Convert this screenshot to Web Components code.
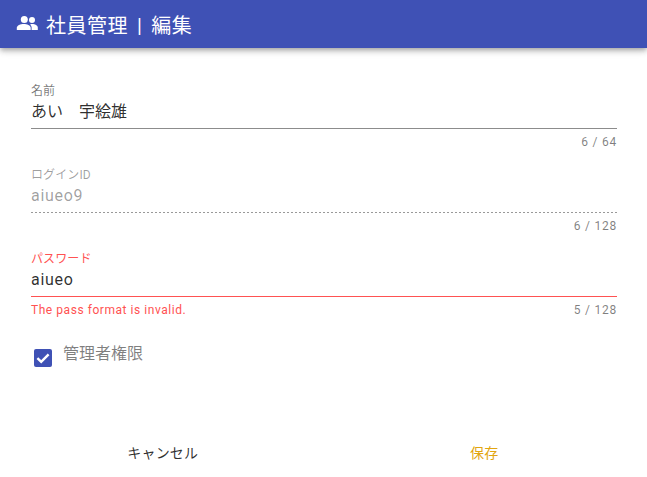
<!DOCTYPE html>
<html lang="ja">
<head>
<meta charset="utf-8">
<style>
    html, body { margin: 0; height: 100%; background: #fff; }
    body { font-family: Roboto, 'Noto Sans CJK JP', sans-serif; overflow: hidden; }
</style>
</head>
<body>
<edit-page>
    <app-bar slot="bar">社員管理 | 編集</app-bar>
    <text-field label="名前" value="あい　宇絵雄" counter="6 / 64"></text-field>
    <text-field label="ログインID" value="aiueo9" counter="6 / 128" disabled latin></text-field>
    <text-field label="パスワード" value="aiueo" counter="5 / 128" error="The pass format is invalid." latin></text-field>
    <check-box>管理者権限</check-box>
    <text-button slot="actions">キャンセル</text-button>
    <text-button slot="actions" color="#e2a50f">保存</text-button>
</edit-page>
<script>
class AppBar extends HTMLElement {
    constructor() {
        super();
        const shadow = this.attachShadow({ mode: 'open' });
        shadow.innerHTML = `
            <style>
                :host {
                    display: flex;
                    align-items: center;
                    gap: 8px;
                    height: 48px;
                    padding: 0 16px;
                    background: #3f51b5;
                    color: #fff;
                    font-size: 20px;
                    letter-spacing: .5px;
                    word-spacing: 3.5px;
                    box-shadow: 0 2px 4px -1px rgba(0,0,0,.2), 0 4px 5px 0 rgba(0,0,0,.14), 0 1px 10px 0 rgba(0,0,0,.12);
                }
                svg { width: 22px; height: 22px; fill: #fff; flex: none; }
            </style>
            <svg viewBox="0 0 22 22">
                <circle cx="8.3" cy="6.4" r="3.5"/>
                <circle cx="16" cy="7.1" r="3"/>
                <path d="M.8 17v-2.2C.8 12.4 4.5 11 7.7 11s7 1.4 7 3.8V17z"/>
                <path d="M15.6 17v-2.4c0-1.3-.6-2.3-1.5-3.2.7-.2 1.5-.4 2.2-.4 2.6 0 5.5 1.3 5.5 3.6V17z"/>
            </svg>
            <slot></slot>
        `;
    }
}

class TextField extends HTMLElement {
    constructor() {
        super();
        const shadow = this.attachShadow({ mode: 'open' });
        shadow.innerHTML = `
            <style>
                :host {
                    display: block;
                    height: 84px;
                    box-sizing: border-box;
                    padding-top: 1px;
                    --accent: rgba(0,0,0,.54);
                    --text: rgba(0,0,0,.82);
                    --line: 1px solid #8c8c8c;
                }
                :host([disabled]) {
                    --accent: rgba(0,0,0,.38);
                    --text: rgba(0,0,0,.38);
                }
                :host([error]) {
                    --accent: #ff5252;
                    --line: 1px solid #ff5252;
                }
                :host([latin]) .input { letter-spacing: .7px; }
                :host([disabled]) .input {
                    border-image: repeating-linear-gradient(90deg, #999 0, #999 2px, transparent 2px, transparent 4px) 1 repeat;
                }
                .label { color: var(--accent); font-size: 12px; line-height: 16px; height: 14px; margin-top: -2px; padding-bottom: 4px; letter-spacing: .1px; }
                .input { color: var(--text); font-size: 16px; line-height: 22px; height: 22px; border-bottom: var(--line); padding-bottom: 5px; }
                .details { display: flex; justify-content: space-between; font-size: 12px; line-height: 14px; margin-top: 6px; }
                .error { color: #ff5252; letter-spacing: .55px; }
                .counter { color: rgba(0,0,0,.5); letter-spacing: .75px; }
            </style>
            <div class="label"></div>
            <div class="input"></div>
            <div class="details"><span class="error"></span><span class="counter"></span></div>
        `;
    }

    connectedCallback() {
        const shadow = this.shadowRoot;
        shadow.querySelector('.label').textContent = this.getAttribute('label');
        shadow.querySelector('.input').textContent = this.getAttribute('value');
        shadow.querySelector('.error').textContent = this.getAttribute('error') || '';
        shadow.querySelector('.counter').textContent = this.getAttribute('counter');
    }
}

class CheckBox extends HTMLElement {
    constructor() {
        super();
        const shadow = this.attachShadow({ mode: 'open' });
        shadow.innerHTML = `
            <style>
                :host {
                    display: flex;
                    align-items: flex-start;
                    gap: 11px;
                    margin-top: 7px;
                    padding-left: 3px;
                    color: rgba(0,0,0,.5);
                    font-size: 16px;
                    line-height: 22px;
                }
                .box { width: 18px; height: 18px; margin-top: 6px; border-radius: 2px; background: #3f51b5; flex: none; }
                svg { display: block; width: 18px; height: 18px; fill: none; stroke: #fff; stroke-width: 2.4; }
            </style>
            <div class="box"><svg viewBox="0 0 18 18"><path d="M3.4 9.2l3.8 3.7 7.4-7.6"/></svg></div>
            <slot></slot>
        `;
    }
}

class TextButton extends HTMLElement {
    constructor() {
        super();
        const shadow = this.attachShadow({ mode: 'open' });
        shadow.innerHTML = `
            <style>
                :host {
                    display: flex;
                    flex: 1;
                    justify-content: center;
                    align-items: center;
                    height: 36px;
                    font-size: 14px;
                    letter-spacing: .2px;
                    color: rgba(0,0,0,.82);
                }
            </style>
            <slot></slot>
        `;
    }

    connectedCallback() {
        const color = this.getAttribute('color');
        if (color) this.style.color = color;
    }
}

class EditPage extends HTMLElement {
    constructor() {
        super();
        const shadow = this.attachShadow({ mode: 'open' });
        shadow.innerHTML = `
            <style>
                :host { display: flex; flex-direction: column; height: 477px; }
                main { padding: 36px 30px 0 31px; flex: 1; }
                .actions { display: flex; padding: 0 2px 7px 2px; }
            </style>
            <slot name="bar"></slot>
            <main><slot></slot></main>
            <div class="actions"><slot name="actions"></slot></div>
        `;
    }
}

customElements.define('app-bar', AppBar);
customElements.define('text-field', TextField);
customElements.define('check-box', CheckBox);
customElements.define('text-button', TextButton);
customElements.define('edit-page', EditPage);
</script>
</body>
</html>
